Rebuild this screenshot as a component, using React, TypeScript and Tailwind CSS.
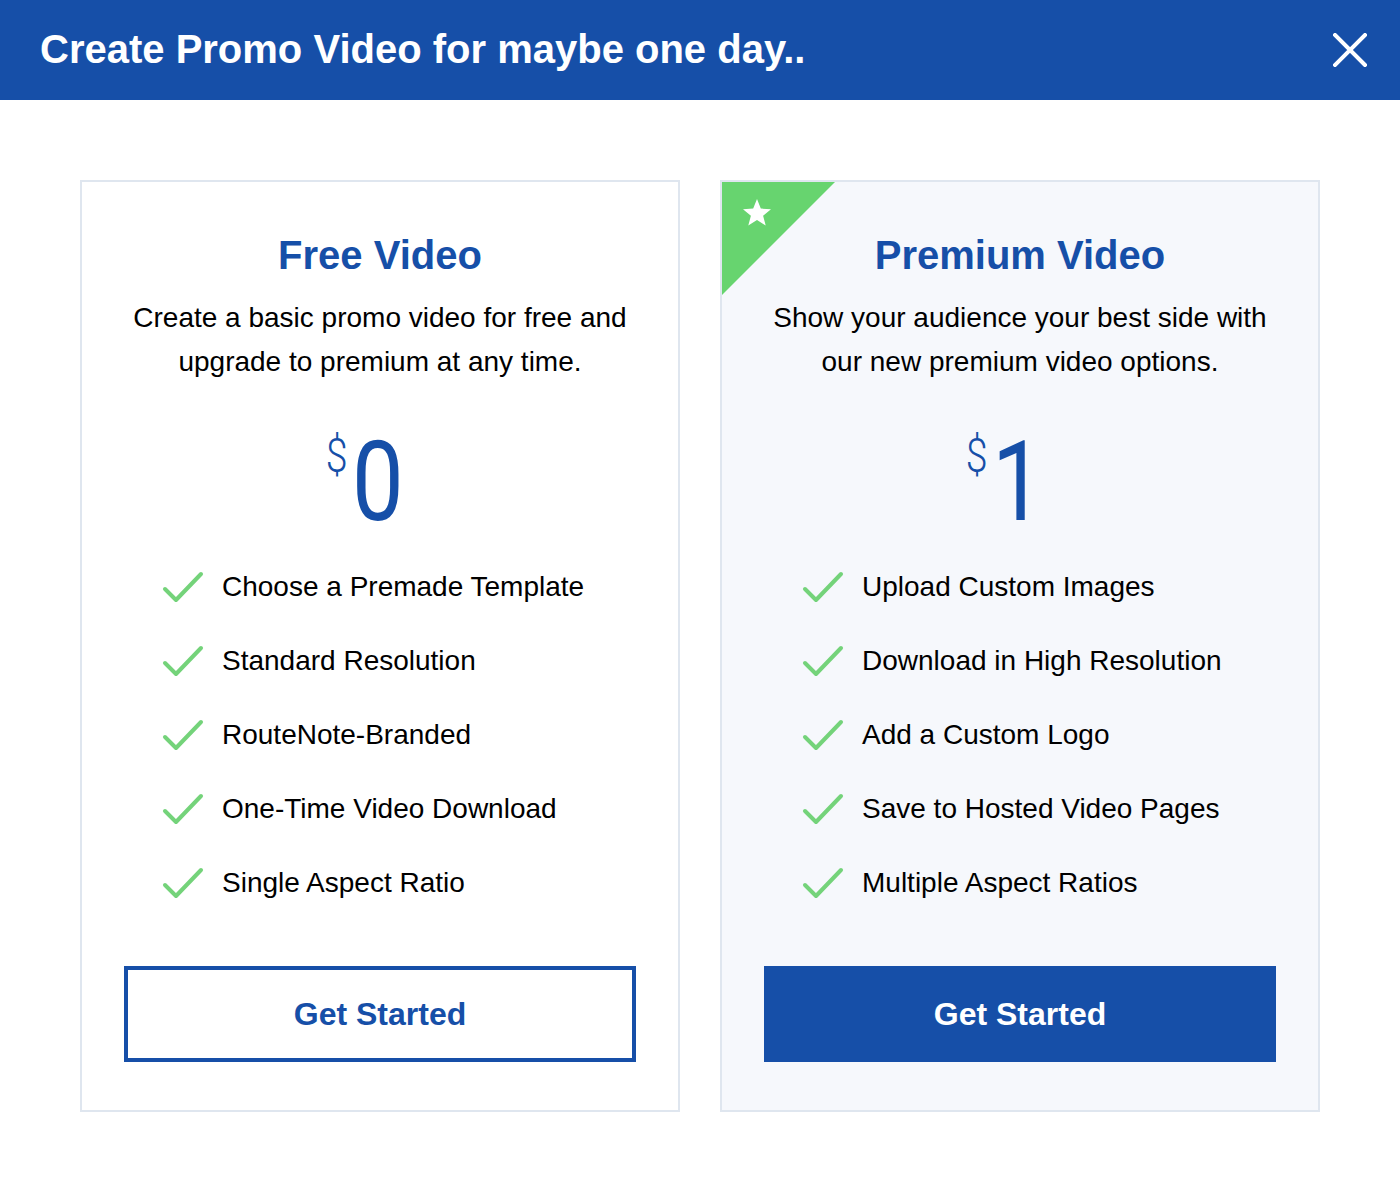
import React from 'react';

const BLUE = '#164fa8';

const Check = () => (
  <svg width="42" height="34" viewBox="0 0 42 34" fill="none" className="shrink-0">
    <path d="M3 19 L14 30 L39 4" stroke="#74d37a" strokeWidth="4" strokeLinecap="round" strokeLinejoin="round" />
  </svg>
);

interface PlanProps {
  title: string;
  desc: string[];
  price: string;
  features: string[];
  premium?: boolean;
}

const Plan: React.FC<PlanProps> = ({ title, desc, price, features, premium }) => (
  <div
    className={`relative flex w-[600px] flex-col items-center border-2 border-[#dfe6ef] px-[42px] pt-[50px] pb-[48px] ${
      premium ? 'bg-[#f6f8fc]' : 'bg-white'
    }`}
  >
    {premium && (
      <div className="absolute left-0 top-0 h-[113px] w-[113px]">
        <svg width="113" height="113" viewBox="0 0 113 113">
          <polygon points="0,0 113,0 0,113" fill="#67d46f" />
          <polygon
            points="35,17 38.8,26.6 49,27.2 41.1,33.7 43.7,43.6 35,38 26.3,43.6 28.9,33.7 21,27.2 31.2,26.6"
            fill="#ffffff"
          />
        </svg>
      </div>
    )}
    <h2 className="text-[40px] font-bold leading-[46px]" style={{ color: BLUE }}>
      {title}
    </h2>
    <p className="mt-[18px] text-center text-[28px] leading-[44px] text-black">
      {desc[0]}
      <br />
      {desc[1]}
    </p>
    <div className="mt-[46px] mr-[24px] flex items-start font-['Roboto',sans-serif]" style={{ color: BLUE }}>
      <span className="mr-[4px] -mt-[2px] inline-block origin-right scale-x-[0.82] text-[48px] font-light leading-[56px]">
        $
      </span>
      <span className="inline-block origin-left scale-x-[0.82] text-[112px] font-normal leading-[104px]">{price}</span>
    </div>
    <ul className="mt-[33px] flex w-full flex-col gap-[34px] pl-[38px]">
      {features.map((f) => (
        <li key={f} className="flex h-[40px] items-center gap-[18px] text-[28px] text-black">
          <Check />
          <span>{f}</span>
        </li>
      ))}
    </ul>
    <button
      className={`mt-[63px] h-[96px] w-[512px] text-[32px] font-bold ${
        premium ? 'bg-[#164fa8] text-white' : 'border-[4px] border-[#164fa8] bg-white text-[#164fa8]'
      }`}
    >
      Get Started
    </button>
  </div>
);

export default function App() {
  return (
    <div className="min-h-[1188px] w-[1400px] bg-white font-['Liberation_Sans',Arial,sans-serif]">
      <header className="flex h-[100px] items-center justify-between bg-[#164fa8] pl-[40px] pr-[33px]">
        <h1 className="-mt-[2px] text-[40px] font-bold text-white">Create Promo Video for maybe one day..</h1>
        <svg width="34" height="34" viewBox="0 0 34 34">
          <path d="M2 2 L32 32 M32 2 L2 32" stroke="#ffffff" strokeWidth="4" strokeLinecap="square" />
        </svg>
      </header>
      <main className="flex justify-center gap-[40px] pt-[80px]">
        <Plan
          title="Free Video"
          desc={['Create a basic promo video for free and', 'upgrade to premium at any time.']}
          price="0"
          features={[
            'Choose a Premade Template',
            'Standard Resolution',
            'RouteNote-Branded',
            'One-Time Video Download',
            'Single Aspect Ratio',
          ]}
        />
        <Plan
          premium
          title="Premium Video"
          desc={['Show your audience your best side with', 'our new premium video options.']}
          price="1"
          features={[
            'Upload Custom Images',
            'Download in High Resolution',
            'Add a Custom Logo',
            'Save to Hosted Video Pages',
            'Multiple Aspect Ratios',
          ]}
        />
      </main>
    </div>
  );
}
